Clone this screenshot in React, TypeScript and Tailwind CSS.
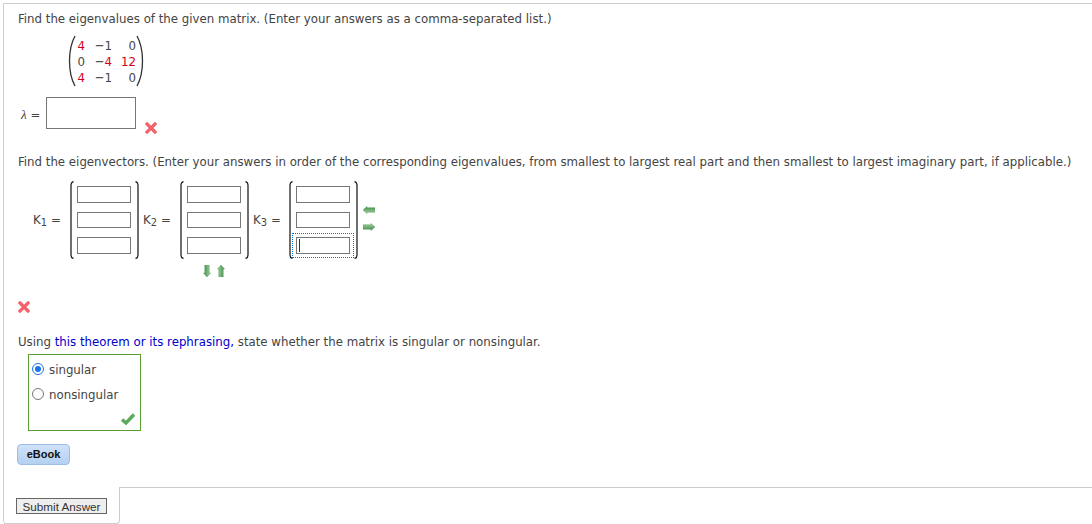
const font = "font-['DejaVu_Sans_Condensed','DejaVu_Sans',sans-serif]";

const Cross = ({ className = '' }: { className?: string }) => (
  <svg className={className} width="12" height="12" viewBox="0 0 12 12">
    <path d="M2 2l8 8M10 2l-8 8" stroke="#f4616a" strokeWidth="3.2" strokeLinecap="square" />
  </svg>
);

const Check = () => (
  <svg width="14" height="12" viewBox="0 0 14 12">
    <path d="M1 6.500l4 3.500 8-8.500" fill="none" stroke="#5cab5c" strokeWidth="3.400" />
  </svg>
);

const Arrow = ({ rotate }: { rotate: string }) => (
  <svg className={rotate} width="12" height="12" viewBox="0 0 12 12">
    <defs>
      <linearGradient id="arrowFill" x1="0" x2="1" y1="0" y2="0">
        <stop offset="0" stopColor="#a5d6a5" />
        <stop offset="1" stopColor="#3f8a46" />
      </linearGradient>
    </defs>
    <path d="M6 0l3.500 4H8.200V12H3.800V4H2.500z" fill="url(#arrowFill)" stroke="#5b9c60" strokeWidth="0.500" />
  </svg>
);

const Bracket = ({ side }: { side: 'left' | 'right' }) => (
  <svg className={side === 'right' ? 'shrink-0 -scale-x-100' : 'shrink-0'} width="4" height="78" viewBox="0 0 4 78">
    <path d="M3.500 .5Q1 1 1 4v70q0 3 2.500 3.500" fill="none" stroke="#222" strokeWidth="1.300" />
  </svg>
);

const Vector = ({ sub, labelWidth, last }: { sub: string; labelWidth: string; last?: boolean }) => (
  <div className="flex items-center">
    <div className={`flex ${labelWidth} items-center whitespace-nowrap text-[#444]`}>
      <span>K</span>
      <sub className="text-[11px]">{sub}</sub>
      <span className="ml-[4px]">=</span>
    </div>
    <div className="ml-[3px] flex h-[78px] w-[69px]">
      <Bracket side="left" />
      <div className="ml-[3px] mr-[4px] flex w-[54px] flex-col gap-[9px] pt-[5px]">
        <div className="h-[17px] border border-[#777] bg-white" />
        <div className="h-[16px] border border-[#777] bg-white" />
        <div className={`flex h-[17px] items-center border border-[#777] bg-white ${last ? 'outline-1 outline-offset-[3px] outline-dotted outline-[#0a76c8]' : ''}`}>
          {last && <div className="ml-[2px] h-[13px] w-px bg-[#333]" />}
        </div>
      </div>
      <Bracket side="right" />
    </div>
  </div>
);

export default function App() {
  return (
    <div className={`${font} h-[524px] w-[1092px] overflow-hidden bg-white pl-[3px] pt-[3px] text-[13.1px] text-[#444]`}>
      <div className="flex h-[521px] flex-col rounded-bl-[4px] border-l border-t border-[#ccc]">
        <p className="ml-[14px] mt-[7px] h-[16px] whitespace-nowrap leading-[16px]">
          Find the eigenvalues of the given matrix. (Enter your answers as a comma-separated list.)
        </p>
        <div className="ml-[64px] mt-[8px] flex h-[52px] w-[80px] items-center">
          <svg width="8" height="52" viewBox="0 0 8 52" className="shrink-0">
            <path d="M7 1C2 10 1.500 18 1.500 26S2 42 7 51" fill="none" stroke="#333" strokeWidth="1.300" />
          </svg>
          <div className="grid grid-cols-[9px_27px_24px] pt-[2px] text-right leading-[16px]">
            <span className="text-[#d0021b]">4</span><span>−1</span><span>0</span>
            <span>0</span><span>−<span className="text-[#d0021b]">4</span></span><span className="text-[#d0021b]">12</span>
            <span className="text-[#d0021b]">4</span><span>−1</span><span>0</span>
          </div>
          <svg width="8" height="52" viewBox="0 0 8 52" className="shrink-0">
            <path d="M1 1C6 10 6.500 18 6.500 26S6 42 1 51" fill="none" stroke="#333" strokeWidth="1.300" />
          </svg>
        </div>
        <div className="ml-[17px] mt-[10px] flex items-start">
          <span className="mt-[8px] w-[25px] whitespace-nowrap"><span className="font-['Liberation_Serif',serif] italic">λ</span> =</span>
          <div className="h-[32px] w-[90px] border border-[#777] bg-white" />
          <Cross className="ml-[9px] mt-[25px]" />
        </div>
        <p className="ml-[14px] mt-[20px] h-[16px] whitespace-nowrap leading-[16px]">
          Find the eigenvectors. (Enter your answers in order of the corresponding eigenvalues, from smallest to largest real part and then smallest to largest imaginary part, if applicable.)
        </p>
        <div className="ml-[29px] mt-[11px] flex flex-col">
          <div className="flex gap-[4px]">
            <Vector sub="1" labelWidth="w-[34px]" />
            <Vector sub="2" labelWidth="w-[34px]" />
            <Vector sub="3" labelWidth="w-[33px]" last />
            <div className="mb-[4px] ml-[1px] flex flex-col justify-center gap-[5px]">
              <Arrow rotate="-rotate-90" />
              <Arrow rotate="rotate-90" />
            </div>
          </div>
          <div className="ml-[168px] mt-[6px] flex gap-[2px]">
            <Arrow rotate="rotate-180" />
            <Arrow rotate="rotate-0" />
          </div>
        </div>
        <Cross className="ml-[14px] mt-[24px]" />
        <p className="ml-[14px] mt-[21px] h-[16px] whitespace-nowrap leading-[16px]">
          Using <span className="text-[#0000cc]">this theorem or its rephrasing,</span> state whether the matrix is singular or nonsingular.
        </p>
        <div className="relative ml-[24px] mt-[4px] flex h-[77px] w-[113px] flex-col border border-[#5a9e32] pl-[3px]">
          <label className="mt-[4px] flex h-[20px] items-center gap-[5px]">
            <span className="flex h-[12px] w-[12px] items-center justify-center rounded-full border-[1.5px] border-[#1a73e8]">
              <span className="h-[6px] w-[6px] rounded-full bg-[#1a73e8]" />
            </span>
            <span className="pt-[2px]">singular</span>
          </label>
          <label className="mt-[5px] flex h-[20px] items-center gap-[5px]">
            <span className="h-[12px] w-[12px] rounded-full border border-[#777]" />
            <span className="pt-[2px]">nonsingular</span>
          </label>
          <div className="absolute bottom-[5px] right-[5px]">
            <Check />
          </div>
        </div>
        <button className="ml-[13px] mt-[13px] h-[21px] w-[53px] rounded-[4px] border border-[#9dbde6] bg-gradient-to-b from-[#cfe2f8] to-[#b4d0f1] font-['Liberation_Sans',sans-serif] text-[11px] font-bold text-[#111]">
          eBook
        </button>
        <div className="flex-1" />
        <div className="flex h-[37px] shrink-0">
          <div className="w-[116px] rounded-br-[4px] border-b border-r border-[#ccc] pl-[12px] pt-[11px]">
            <button className="block h-[16px] w-[91px] border border-[#666] bg-[#eee] pt-px font-['Liberation_Sans',sans-serif] text-[11.7px] leading-[14px] text-[#333]">
              Submit Answer
            </button>
          </div>
          <div className="flex-1 border-t border-[#ccc]" />
        </div>
      </div>
    </div>
  );
}
